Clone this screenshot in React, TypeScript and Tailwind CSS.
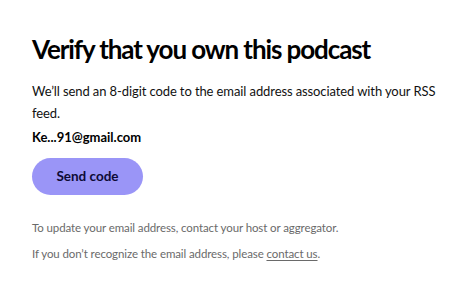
export default function App() {
  return (
    <div className="min-h-screen w-full bg-white px-8 pt-[33px] font-['Lato',sans-serif] text-black">
      <h1 className="text-[26px] font-bold leading-[32px] tracking-[-1.1px]">Verify that you own this podcast</h1>
      <p className="mt-[15px] text-[13px] leading-[22px] tracking-[-0.1px] text-[#111]">
        We’ll send an 8-digit code to the email address associated with your RSS feed.
      </p>
      <p className="mt-[3px] text-[13px] font-bold leading-[20px]">Ke...91@gmail.com</p>
      <button className="mt-[11px] h-[37px] w-[111px] rounded-full bg-[#9a95f7] text-[13.5px] font-bold text-[#0d0a35]">
        Send code
      </button>
      <p className="mt-[24px] text-[11.5px] leading-[18px] tracking-[-0.1px] text-[#6a6a6a]">
        To update your email address, contact your host or aggregator.
      </p>
      <p className="mt-[8px] text-[11.5px] leading-[18px] tracking-[-0.1px] text-[#6a6a6a]">
        If you don’t recognize the email address, please{' '}
        <a href="#" className="underline underline-offset-2">contact us</a>.
      </p>
    </div>
  );
}
